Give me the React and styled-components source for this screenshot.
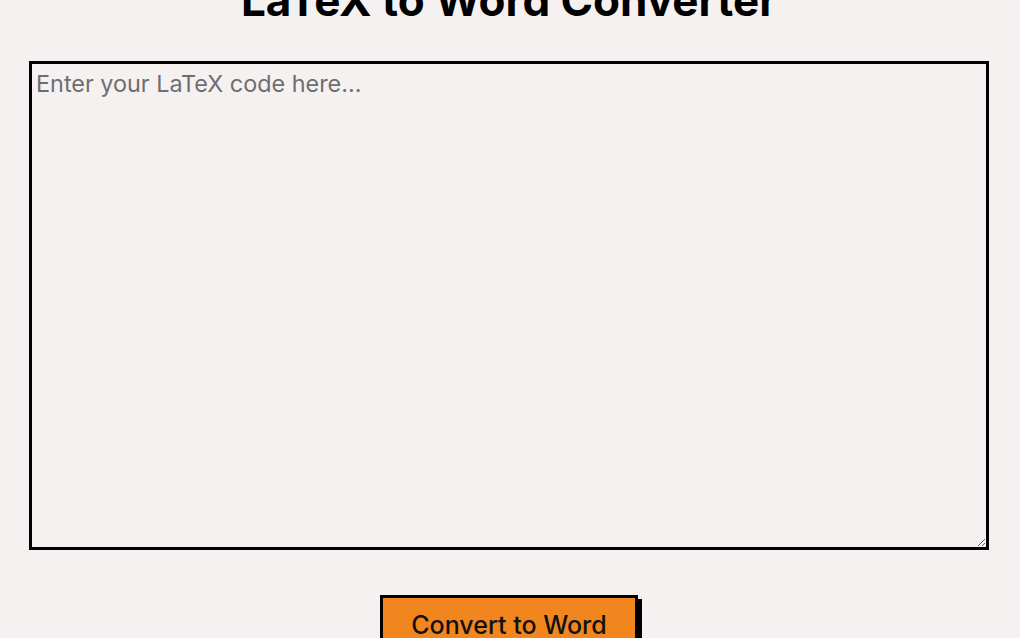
import React, { useState } from "react";
import styled, { createGlobalStyle } from "styled-components";

const GlobalStyle = createGlobalStyle`
  html, body {
    margin: 0;
    padding: 0;
    background: #f6f1f1;
    font-family: Inter, "Open Sans", "Liberation Sans", sans-serif;
  }
`;

const Page = styled.div`
  display: flex;
  flex-direction: column;
  align-items: center;
  padding: 0 31px 0 29px;
`;

const Title = styled.h1`
  margin: -24px 0 37px;
  font-size: 44px;
  line-height: 48px;
  font-weight: 700;
  color: #000;
`;

const Editor = styled.textarea`
  box-sizing: border-box;
  width: 960px;
  height: 489px;
  padding: 5px 4px;
  border: 3px solid #000;
  background: #f6f1f1;
  font-family: inherit;
  font-size: 23.4px;
  color: #111;
  outline: none;

  &::placeholder {
    color: #6e6e6e;
  }
`;

const ConvertButton = styled.button`
  margin-top: 45px;
  width: 258px;
  height: 64px;
  padding: 0 0 4px;
  border: 3px solid #000;
  background: #f2861e;
  box-shadow: 4px 4px 0 #000;
  font-family: inherit;
  font-size: 25px;
  font-weight: 500;
  color: #111;
  cursor: pointer;
`;

export default function App() {
  const [code, setCode] = useState("");
  return (
    <>
      <GlobalStyle />
      <Page>
        <Title>LaTeX to Word Converter</Title>
        <Editor
          value={code}
          onChange={(e) => setCode(e.target.value)}
          placeholder="Enter your LaTeX code here..."
        />
        <ConvertButton>Convert to Word</ConvertButton>
      </Page>
    </>
  );
}
